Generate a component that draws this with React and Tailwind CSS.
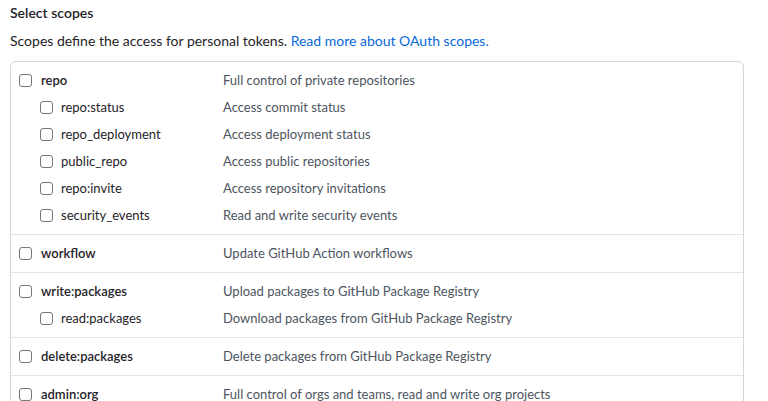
const scopeGroups = [
  {
    name: 'repo',
    description: 'Full control of private repositories',
    children: [
      { name: 'repo:status', description: 'Access commit status' },
      { name: 'repo_deployment', description: 'Access deployment status' },
      { name: 'public_repo', description: 'Access public repositories' },
      { name: 'repo:invite', description: 'Access repository invitations' },
      { name: 'security_events', description: 'Read and write security events' },
    ],
  },
  { name: 'workflow', description: 'Update GitHub Action workflows', children: [] },
  {
    name: 'write:packages',
    description: 'Upload packages to GitHub Package Registry',
    children: [{ name: 'read:packages', description: 'Download packages from GitHub Package Registry' }],
  },
  { name: 'delete:packages', description: 'Delete packages from GitHub Package Registry', children: [] },
  { name: 'admin:org', description: 'Full control of orgs and teams, read and write org projects', children: [] },
];

function Checkbox() {
  return (
    <span className="w-[13px] h-[13px] shrink-0 rounded-[3px] border border-[#767676] bg-white" />
  );
}

function ScopeRow({ scope, nested }) {
  return (
    <div className="flex items-center h-[27px] pb-[1px]">
      <div className={`flex items-center w-[212px] shrink-0 ${nested ? 'pl-[29px] gap-[8px]' : 'pl-[8px] gap-[9px]'}`}>
        <Checkbox />
        <span className={nested ? 'text-[#1f2328]' : 'font-semibold text-[#1f2328]'}>{scope.name}</span>
      </div>
      <span className="text-[#4d5560]">{scope.description}</span>
    </div>
  );
}

export default function App() {
  return (
    <div className="min-h-screen bg-white px-[10px] pt-[3px] text-[14px] leading-[20px]" style={{ fontFamily: '"Segoe UI", Lato, sans-serif' }}>
      <h3 className="font-semibold text-[#1f2328] h-[22px]">Select scopes</h3>
      <p className="mt-[6px] text-[#1f2328]">
        Scopes define the access for personal tokens.{' '}
        <a href="#" className="text-[#0969da]">Read more about OAuth scopes.</a>
      </p>
      <div className="mt-[10px] w-[734px] rounded-[6px] border border-[#d0d7de] divide-y divide-[#e1e4e8] text-[13px]">
        {scopeGroups.map((group) => (
          <div key={group.name} className="py-[5px]">
            <ScopeRow scope={group} />
            {group.children.map((child) => (
              <ScopeRow key={child.name} scope={child} nested />
            ))}
          </div>
        ))}
      </div>
    </div>
  );
}
